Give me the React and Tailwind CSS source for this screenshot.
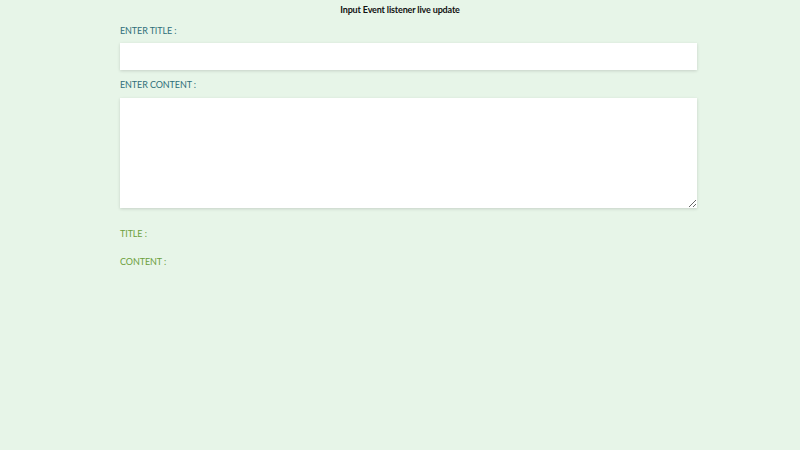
export default function App() {
  return (
    <div className="min-h-[450px] w-full bg-[#e7f5e8] pt-[4px]" style={{ fontFamily: 'Lato, "Noto Sans", sans-serif' }}>
      <h1 className="text-center text-[9px] font-bold leading-[12px] tracking-[-0.15px] text-[#111]">Input Event listener live update</h1>
      <div className="ml-[120px] w-[577px]">
        <label className="block mt-[9px] text-[9px] leading-[12px] tracking-[-0.1px] text-[#2f6f7a]">ENTER TITLE :</label>
        <input className="block mt-[6px] h-[27px] w-full bg-white outline-none shadow-[0_1px_3px_rgba(0,0,0,0.15)]" />
        <label className="block mt-[9px] text-[9px] leading-[12px] tracking-[-0.1px] text-[#2f6f7a]">ENTER CONTENT :</label>
        <textarea className="block mt-[7px] h-[110px] w-full bg-white outline-none shadow-[0_1px_3px_rgba(0,0,0,0.15)]" />
        <div className="mt-[20px] text-[9px] leading-[12px] tracking-[-0.1px] text-[#6c9f3c]">TITLE :</div>
        <div className="mt-[16px] text-[9px] leading-[12px] tracking-[-0.1px] text-[#6c9f3c]">CONTENT :</div>
      </div>
    </div>
  );
}
